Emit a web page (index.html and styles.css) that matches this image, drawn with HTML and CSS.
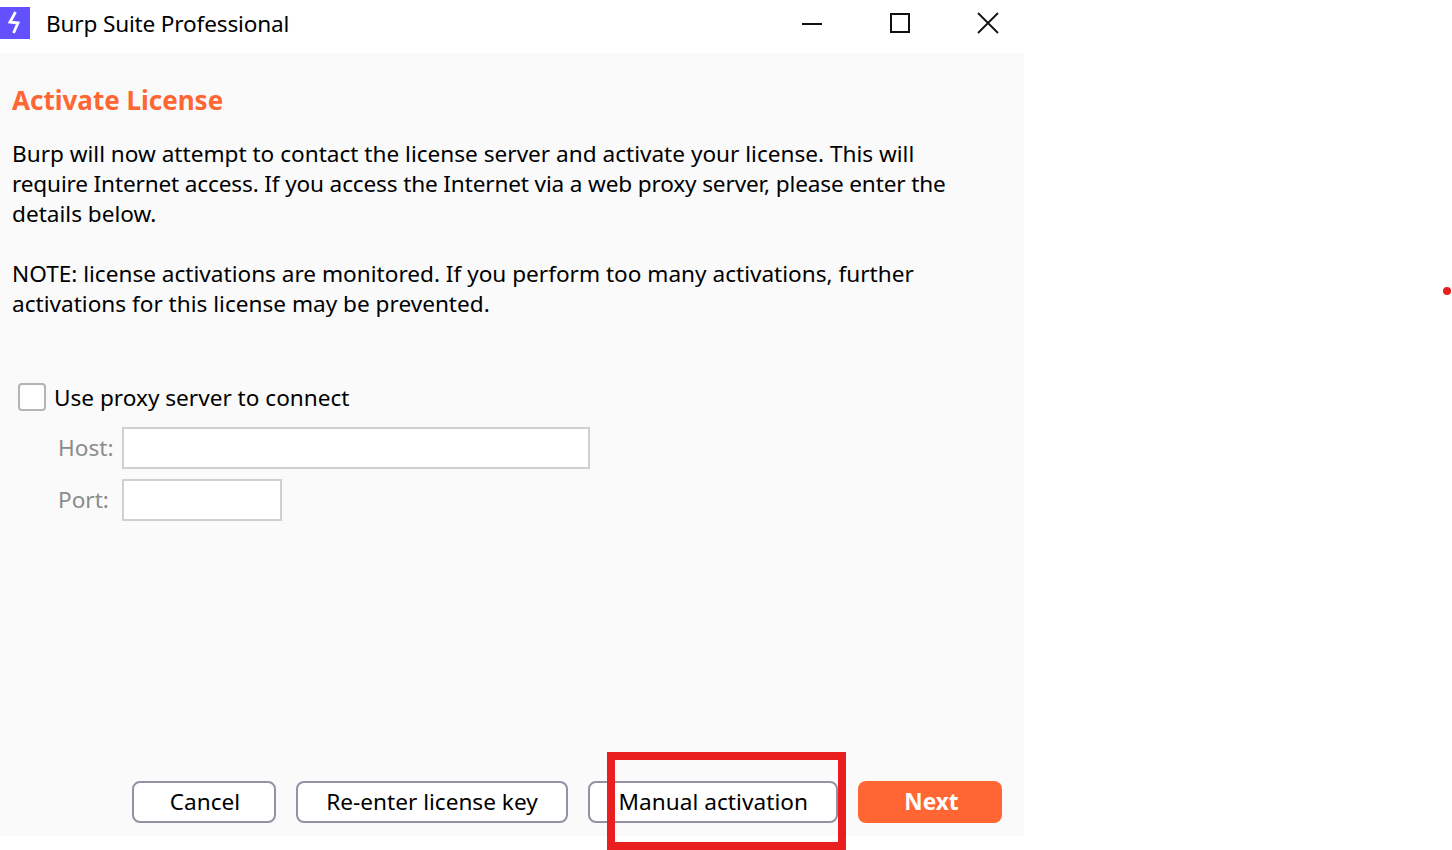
FILE: index.html
```html
<!DOCTYPE html>
<html lang="en">
<head>
    <meta charset="UTF-8" />
    <title>Burp Suite Professional</title>
    <link rel="stylesheet" href="styles.css">
</head>
<body>
    <div class="window">
        <div class="titlebar">
            <div class="app-icon">
                <svg width="30" height="32" viewBox="0 0 30 32">
                    <path d="M15.5 5 L10 15 L18 16 L13.5 26" fill="none" stroke="#fff" stroke-width="2.8"/>
                </svg>
            </div>
            <span class="app-title">Burp Suite Professional</span>
            <div class="win-controls">
                <svg class="win-btn" width="22" height="22" viewBox="0 0 22 22"><path d="M1 12H21" stroke="#111" stroke-width="2"/></svg>
                <svg class="win-btn" width="22" height="22" viewBox="0 0 22 22"><rect x="2" y="2" width="18" height="18" fill="none" stroke="#111" stroke-width="2"/></svg>
                <svg class="win-btn" width="24" height="24" viewBox="0 0 24 24"><path d="M2 2L22 22M22 2L2 22" stroke="#111" stroke-width="1.8"/></svg>
            </div>
        </div>
        <div class="panel">
            <h1>Activate License</h1>
            <p class="message">Burp will now attempt to contact the license server and activate your license. This will<br><span class="tight">require Internet access. If you access the Internet via a web proxy server, please enter the</span><br>details below.</p>
            <p class="message note">NOTE: license activations are monitored. If you perform too many activations, further<br>activations for this license may be prevented.</p>
            <label class="proxy-check"><span class="checkbox"></span>Use proxy server to connect</label>
            <div class="field-row"><span class="field-label">Host:</span><div class="field field-host"></div></div>
            <div class="field-row"><span class="field-label">Port:</span><div class="field field-port"></div></div>
            <div class="footer">
                <button class="btn btn-cancel">Cancel</button>
                <button class="btn btn-rekey">Re-enter license key</button>
                <button class="btn btn-manual">Manual activation</button>
                <button class="btn btn-next">Next</button>
            </div>
        </div>
    </div>
    <div class="highlight"></div>
    <div class="red-dot"></div>
</body>
</html>
```

FILE: styles.css
```css
body {
    margin: 0;
    height: 850px;
    overflow: hidden;
    background: #fff;
    color: #000;
    font-family: "Noto Sans", sans-serif;
    font-size: 22.6px;
}
.window {
    width: 1024px;
}
.titlebar {
    height: 53px;
    display: flex;
    align-items: flex-start;
    background: #fff;
}
.app-icon {
    width: 30px;
    height: 32px;
    margin-top: 7px;
    background: #6351ff;
}
.app-icon svg {
    display: block;
}
.app-title {
    margin-left: 16px;
    margin-top: 7px;
    line-height: 34px;
    letter-spacing: -0.17px;
}
.win-controls {
    margin-left: auto;
    margin-right: 24px;
    display: flex;
    align-items: center;
    gap: 65px;
    height: 46px;
}
.win-btn:first-child {
    margin-right: 1px;
}
.panel {
    height: 783px;
    box-sizing: border-box;
    background: #fafafa;
    padding: 28px 22px 13px 12px;
    display: flex;
    flex-direction: column;
}
h1 {
    margin: 0;
    font-size: 26px;
    line-height: 38px;
    font-weight: 700;
    color: #ff6633;
}
.message {
    margin: 20px 0 0;
    line-height: 30px;
}
.tight {
    letter-spacing: -0.15px;
}
.note {
    margin-top: 30px;
}
.proxy-check {
    display: flex;
    align-items: center;
    gap: 8px;
    margin: 62px 0 0 6px;
    line-height: 34px;
}
.checkbox {
    width: 24px;
    height: 24px;
    margin-bottom: 3px;
    border: 2px solid #b4b4b4;
    border-radius: 4px;
    background: #fff;
}
.field-row {
    display: flex;
    align-items: center;
    margin: 12px 0 0 46px;
}
.field-row + .field-row {
    margin-top: 10px;
}
.field-label {
    width: 64px;
    padding-bottom: 2px;
    color: #8c8c8c;
}
.field {
    height: 38px;
    border: 2px solid #cfcfcf;
    background: #fff;
}
.field-host {
    width: 464px;
}
.field-port {
    width: 156px;
}
.footer {
    margin-top: auto;
    display: flex;
    justify-content: flex-end;
    gap: 20px;
}
.btn {
    height: 42px;
    box-sizing: border-box;
    border: 2px solid #9392a5;
    border-radius: 8px;
    background: #fff;
    color: #000;
    font: inherit;
    padding: 0 0 2px;
}
.btn-cancel {
    width: 144px;
    padding-left: 2px;
}
.btn-rekey {
    width: 272px;
}
.btn-manual {
    width: 250px;
    text-align: right;
    padding-right: 28px;
    letter-spacing: 0.05px;
}
.btn-next {
    width: 144px;
    border: none;
    background: #ff6633;
    color: #fff;
    font-weight: 700;
    padding-left: 3px;
}
.highlight {
    position: absolute;
    left: 607px;
    top: 752px;
    width: 239px;
    height: 98px;
    box-sizing: border-box;
    border: 8px solid #e91e1e;
}
.red-dot {
    position: absolute;
    left: 1443px;
    top: 287px;
    width: 8px;
    height: 8px;
    border-radius: 50%;
    background: #e91e1e;
}
```
